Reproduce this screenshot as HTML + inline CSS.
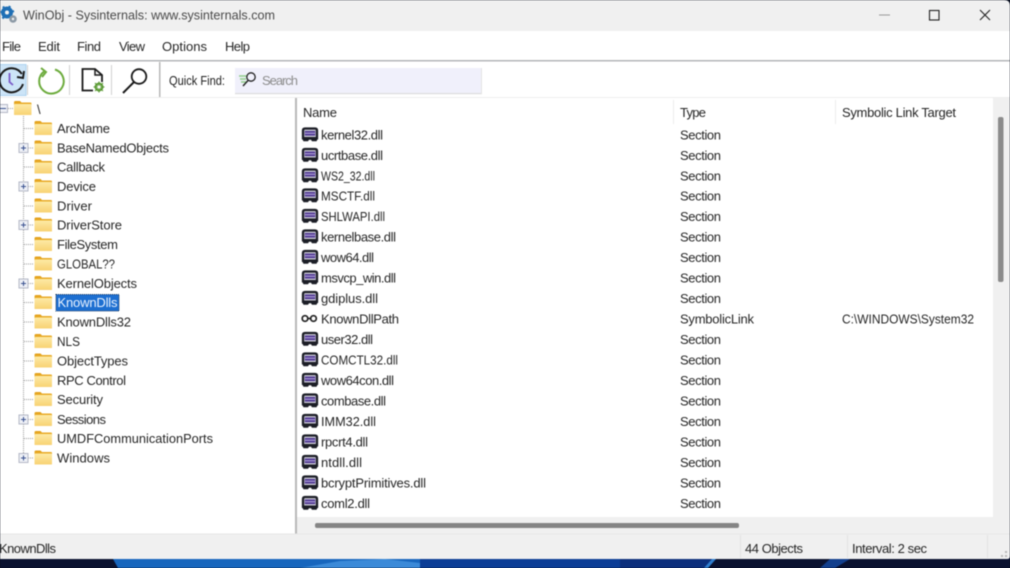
<!DOCTYPE html>
<html><head><meta charset="utf-8"><title>WinObj</title>
<style>
html,body{margin:0;padding:0;width:1010px;height:568px;overflow:hidden;background:#0a1020}
svg{display:block;filter:blur(.45px)}
text{font-family:"Liberation Sans",sans-serif;font-size:13px;fill:#262626}
</style></head><body>
<svg width="1010" height="568" viewBox="0 0 1010 568" xmlns="http://www.w3.org/2000/svg">
<defs>
<linearGradient id="fb" x1="0" y1="0" x2="0" y2="1"><stop offset="0" stop-color="#fdeaa6"/><stop offset="1" stop-color="#f8d273"/></linearGradient>
<symbol id="folder" width="18" height="16" viewBox="0 0 18 16" overflow="visible">
<path d="M0 2.500Q0 1 1.500 1H6L8 3H0Z" fill="#e3a11c"/><rect x="0" y="2.500" width="17.500" height="12.500" rx="1" fill="#e8aa26"/><rect x="0" y="4" width="17.500" height="11" rx="1" fill="url(#fb)"/>
</symbol>
<symbol id="sec" width="18" height="15" viewBox="0 0 18 15" overflow="visible">
<path d="M2 11.200V3.500Q2 1.500 4 1.500H14Q16 1.500 16 3.500V11.200Z" fill="#c9c9d4" stroke="#1c1e26" stroke-width="2.300"/>
<rect x="3.800" y="4" width="10.400" height="4.600" fill="#4d3590"/><rect x="4" y="5.600" width="10" height="1.300" fill="#a797d4"/>
<path d="M1 11.500H17L15.500 14.300H11L10 12.800H8L7 14.300H2.500Z" fill="#1c1e26"/>
</symbol>
<symbol id="plus" width="10" height="10" viewBox="0 0 10 10" overflow="visible">
<rect x=".5" y=".5" width="9" height="9" fill="#eef0f6" stroke="#b4b8c6"/><path d="M2.500 5H7.500M5 2.500V7.500" stroke="#39518f" stroke-width="1"/>
</symbol>
</defs>

<!-- wallpaper -->
<rect y="555" width="1010" height="13" fill="#0a1230"/>
<polygon points="113,559 420,559 420,568 118,568" fill="#1766bd"/>
<polygon points="300,568 340,561 385,559 420,563 430,568" fill="#3b8ad8"/>
<polygon points="420,559 620,559 620,568 420,568" fill="#0b3d96"/>
<polygon points="620,559 712,559 708,568 620,568" fill="#0c2f7c"/>
<polygon points="712,559 716,559 708,568 704,568" fill="#2f7fd0"/>
<polygon points="830,559 850,559 835,568 820,568" fill="#123f8d"/>

<!-- window -->
<path d="M0 0H1004Q1010 0 1010 6V556Q1010 559 1007 559H0Z" fill="#f0f0f0"/>
<rect y="31" width="1010" height="29" fill="#fff"/>
<rect y="60" width="1010" height="1.500" fill="#b4b6b8"/>
<rect y="61.500" width="1010" height="36" fill="#fff"/>
<rect y="97" width="1010" height="1" fill="#eeeeee"/>

<!-- title bar -->
<circle cx="7" cy="12.500" r="6" fill="#1f6fb5"/><circle cx="7" cy="12.500" r="2" fill="#f3f3f3"/>
<path d="M3 6.500l2 2.500M10 6l-1.500 3M.5 12h3M14 11l-3 1M2.500 18.500l2.500-3" stroke="#1f6fb5" stroke-width="2.200"/>
<circle cx="13" cy="19" r="3.800" fill="#8d9aa6"/><circle cx="13" cy="19" r="1.200" fill="#f3f3f3"/>
<text x="23" y="19.500" textLength="252" lengthAdjust="spacingAndGlyphs" style="fill:#4a4a4a">WinObj - Sysinternals: www.sysinternals.com</text>
<rect x="879" y="14.500" width="11" height="1" fill="#999"/>
<rect x="929.500" y="10.500" width="9.500" height="9.500" fill="none" stroke="#222" stroke-width="1.100"/>
<path d="M980 10L990 20M990 10L980 20" stroke="#222" stroke-width="1.100"/>

<!-- menu -->
<text x="2" y="51" textLength="19">File</text>
<text x="38" y="51" textLength="22">Edit</text>
<text x="77" y="51" textLength="24">Find</text>
<text x="119" y="51" textLength="26">View</text>
<text x="162" y="51" textLength="45">Options</text>
<text x="225" y="51" textLength="25">Help</text>

<!-- toolbar -->
<rect x="-1" y="64.500" width="27" height="31" fill="#cce4f7" stroke="#aed3f0"/>
<path d="M21.800 74A12 12 0 1 0 23 84" fill="none" stroke="#1a1a1a" stroke-width="2"/>
<path d="M17 77L23 78L24 71" fill="none" stroke="#1a1a1a" stroke-width="2"/>
<path d="M9.500 73V82L13 85" fill="none" stroke="#7a5ac8" stroke-width="1.800"/>
<rect x="27" y="65" width="1" height="30" fill="#d0d0d0"/>
<path d="M44 71.500A12.300 12.300 0 1 0 55 69.500" fill="none" stroke="#6cab3c" stroke-width="2"/>
<path d="M41 68L46 72L42 77" fill="none" stroke="#6cab3c" stroke-width="2"/>
<rect x="69" y="65" width="1" height="30" fill="#d0d0d0"/>
<path d="M93 90.500H82.500V69H95L102 75V82" fill="none" stroke="#1a1a1a" stroke-width="1.800"/>
<path d="M95 69V75H102" fill="none" stroke="#1a1a1a" stroke-width="1.500"/>
<circle cx="99" cy="87" r="3.500" fill="none" stroke="#5b9a35" stroke-width="2"/>
<path d="M99 81.500V92.500M93.500 87H104.500M95 83L103 91M103 83L95 91" stroke="#5b9a35" stroke-width="1.100"/>
<circle cx="99" cy="87" r="1.500" fill="#fff"/>
<rect x="111" y="65" width="1" height="30" fill="#d0d0d0"/>
<circle cx="139" cy="76.500" r="7.300" fill="none" stroke="#1a1a1a" stroke-width="1.800"/>
<path d="M134 82L123 93" stroke="#1a1a1a" stroke-width="2"/>
<rect x="159" y="62" width="1.500" height="35" fill="#b8b8b8"/>
<text x="169" y="85" textLength="56" lengthAdjust="spacingAndGlyphs" style="fill:#1e1e1e">Quick Find:</text>
<rect x="235" y="68" width="247" height="26" fill="#f0f0fb"/>
<rect x="235" y="93" width="247" height="1.200" fill="#dcdcdc"/><rect x="481" y="68" width="1" height="26" fill="#e4e4e4"/>
<path d="M239 76H247M240 79H246M241 82H246" stroke="#8fce8a" stroke-width="1.500"/>
<circle cx="251" cy="77" r="4.200" fill="none" stroke="#222" stroke-width="1.300"/>
<path d="M248 80.500L243 86" stroke="#222" stroke-width="1.400"/>
<text x="262" y="85" textLength="36" style="fill:#8c8c8c">Search</text>

<!-- panes -->
<rect y="98" width="295" height="436" fill="#fff"/>
<rect x="297" y="98" width="696" height="419" fill="#fff"/>
<rect x="295" y="98" width="2" height="436" fill="#b8b8b8"/>
<rect x="673" y="100" width="1" height="24" fill="#ececec"/>
<rect x="835" y="100" width="1" height="24" fill="#ececec"/>
<rect x="998" y="117" width="5.500" height="165" rx="2" fill="#8b8b8b"/>
<rect x="315" y="523" width="424" height="5" rx="2" fill="#858585"/>
<rect y="533.500" width="1010" height="1" fill="#e6e6e6"/>

<!-- tree lines -->
<g stroke="#9a9a9a" stroke-width="1" stroke-dasharray="1 1" fill="none">
<path d="M23.500 116V458M8 108.500H15"/>
<path d="M24 128.500H34M24 148H34M24 167H34M24 186.500H34M24 206H34M24 225H34M24 244.500H34M24 264H34M24 283.500H34M24 302.500H34M24 322H34M24 341.500H34M24 361H34M24 380.500H34M24 399.500H34M24 419.500H34M24 438.500H34M24 458H34"/>
</g>
<rect x="-2" y="104.500" width="9.500" height="8" fill="#eef0f6" stroke="#b4b8c6"/><path d="M0 108.500H6" stroke="#39518f"/>
<use href="#plus" x="18.500" y="143"/>
<use href="#plus" x="18.500" y="181.500"/>
<use href="#plus" x="18.500" y="220"/>
<use href="#plus" x="18.500" y="278.500"/>
<use href="#plus" x="18.500" y="414.500"/>
<use href="#plus" x="18.500" y="453"/>

<!-- tree folders -->
<use href="#folder" x="14" y="100"/>
<use href="#folder" x="34.500" y="120"/>
<use href="#folder" x="34.500" y="139.500"/>
<use href="#folder" x="34.500" y="158.500"/>
<use href="#folder" x="34.500" y="178"/>
<use href="#folder" x="34.500" y="197.500"/>
<use href="#folder" x="34.500" y="216.500"/>
<use href="#folder" x="34.500" y="236"/>
<use href="#folder" x="34.500" y="255.500"/>
<use href="#folder" x="34.500" y="275"/>
<use href="#folder" x="34.500" y="294"/>
<use href="#folder" x="34.500" y="313.500"/>
<use href="#folder" x="34.500" y="333"/>
<use href="#folder" x="34.500" y="352.500"/>
<use href="#folder" x="34.500" y="372"/>
<use href="#folder" x="34.500" y="391"/>
<use href="#folder" x="34.500" y="411"/>
<use href="#folder" x="34.500" y="430"/>
<use href="#folder" x="34.500" y="449.500"/>

<!-- tree labels -->
<text x="37" y="114">\</text>
<text x="57" y="133" textLength="53">ArcName</text>
<text x="57" y="152.500" textLength="112">BaseNamedObjects</text>
<text x="57" y="171.500" textLength="48">Callback</text>
<text x="57" y="191" textLength="39">Device</text>
<text x="57" y="210.500" textLength="35">Driver</text>
<text x="57" y="229.500" textLength="65">DriverStore</text>
<text x="57" y="249" textLength="61">FileSystem</text>
<text x="57" y="268.500" textLength="58" lengthAdjust="spacingAndGlyphs">GLOBAL??</text>
<text x="57" y="288" textLength="80">KernelObjects</text>
<rect x="56" y="294.500" width="63" height="16.500" fill="#1d6fd1" stroke="#0f2f58" stroke-dasharray="1 1"/>
<text x="57.500" y="307" textLength="60" style="fill:#e8f2ff">KnownDlls</text>
<text x="57" y="326.500" textLength="74">KnownDlls32</text>
<text x="57" y="346" textLength="23" lengthAdjust="spacingAndGlyphs">NLS</text>
<text x="57" y="365.500" textLength="71">ObjectTypes</text>
<text x="57" y="385" textLength="69">RPC Control</text>
<text x="57" y="404" textLength="46">Security</text>
<text x="57" y="424" textLength="49">Sessions</text>
<text x="57" y="443" textLength="156" lengthAdjust="spacingAndGlyphs">UMDFCommunicationPorts</text>
<text x="57" y="462.500" textLength="53">Windows</text>

<!-- list header -->
<text x="303" y="117" textLength="34">Name</text>
<text x="680" y="117" textLength="26">Type</text>
<text x="842" y="117" textLength="114">Symbolic Link Target</text>

<!-- list icons -->
<use href="#sec" x="301" y="127"/>
<use href="#sec" x="301" y="147.500"/>
<use href="#sec" x="301" y="168"/>
<use href="#sec" x="301" y="188"/>
<use href="#sec" x="301" y="208.500"/>
<use href="#sec" x="301" y="229"/>
<use href="#sec" x="301" y="249.500"/>
<use href="#sec" x="301" y="270"/>
<use href="#sec" x="301" y="290.500"/>
<g fill="none" stroke="#222" stroke-width="1.700"><circle cx="305" cy="318.500" r="2.800"/><circle cx="313.500" cy="318.500" r="2.800"/><path d="M307.500 318.500H311"/></g>
<use href="#sec" x="301" y="331.500"/>
<use href="#sec" x="301" y="352"/>
<use href="#sec" x="301" y="372.500"/>
<use href="#sec" x="301" y="393"/>
<use href="#sec" x="301" y="413.500"/>
<use href="#sec" x="301" y="434"/>
<use href="#sec" x="301" y="454.500"/>
<use href="#sec" x="301" y="475"/>
<use href="#sec" x="301" y="495.500"/>

<!-- list names -->
<text x="321" y="139.500" textLength="62">kernel32.dll</text>
<text x="321" y="160" textLength="62">ucrtbase.dll</text>
<text x="321" y="180.500" textLength="54" lengthAdjust="spacingAndGlyphs">WS2_32.dll</text>
<text x="321" y="200.500" textLength="54" lengthAdjust="spacingAndGlyphs">MSCTF.dll</text>
<text x="321" y="221" textLength="64" lengthAdjust="spacingAndGlyphs">SHLWAPI.dll</text>
<text x="321" y="241.500" textLength="75">kernelbase.dll</text>
<text x="321" y="262" textLength="53">wow64.dll</text>
<text x="321" y="282.500" textLength="75">msvcp_win.dll</text>
<text x="321" y="303" textLength="57">gdiplus.dll</text>
<text x="321" y="323.500" textLength="78">KnownDllPath</text>
<text x="321" y="344" textLength="52">user32.dll</text>
<text x="321" y="364.500" textLength="77" lengthAdjust="spacingAndGlyphs">COMCTL32.dll</text>
<text x="321" y="385" textLength="73">wow64con.dll</text>
<text x="321" y="405.500" textLength="65">combase.dll</text>
<text x="321" y="426" textLength="55" lengthAdjust="spacingAndGlyphs">IMM32.dll</text>
<text x="321" y="446.500" textLength="47">rpcrt4.dll</text>
<text x="321" y="467" textLength="41">ntdll.dll</text>
<text x="321" y="487.500" textLength="105">bcryptPrimitives.dll</text>
<text x="321" y="508" textLength="49">coml2.dll</text>

<!-- list types -->
<text x="680" y="139.500" textLength="41">Section</text>
<text x="680" y="160" textLength="41">Section</text>
<text x="680" y="180.500" textLength="41">Section</text>
<text x="680" y="200.500" textLength="41">Section</text>
<text x="680" y="221" textLength="41">Section</text>
<text x="680" y="241.500" textLength="41">Section</text>
<text x="680" y="262" textLength="41">Section</text>
<text x="680" y="282.500" textLength="41">Section</text>
<text x="680" y="303" textLength="41">Section</text>
<text x="680" y="323.500" textLength="74">SymbolicLink</text>
<text x="842" y="323.500" textLength="132" lengthAdjust="spacingAndGlyphs">C:\WINDOWS\System32</text>
<text x="680" y="344" textLength="41">Section</text>
<text x="680" y="364.500" textLength="41">Section</text>
<text x="680" y="385" textLength="41">Section</text>
<text x="680" y="405.500" textLength="41">Section</text>
<text x="680" y="426" textLength="41">Section</text>
<text x="680" y="446.500" textLength="41">Section</text>
<text x="680" y="467" textLength="41">Section</text>
<text x="680" y="487.500" textLength="41">Section</text>
<text x="680" y="508" textLength="41">Section</text>

<!-- status bar -->
<text x="-1" y="553" textLength="57">KnownDlls</text>
<rect x="740" y="535" width="1" height="23" fill="#e2e2e2"/>
<rect x="847" y="535" width="1" height="23" fill="#e2e2e2"/>
<rect x="987" y="535" width="1" height="23" fill="#e2e2e2"/>
<text x="745" y="553" textLength="58">44 Objects</text>
<text x="852" y="553" textLength="75">Interval: 2 sec</text>
<path d="M1005 555h2v2h-2zM1001 555h2v2h-2zM1005 551h2v2h-2z" fill="#b8b8b8"/>
</svg>
</body></html>
